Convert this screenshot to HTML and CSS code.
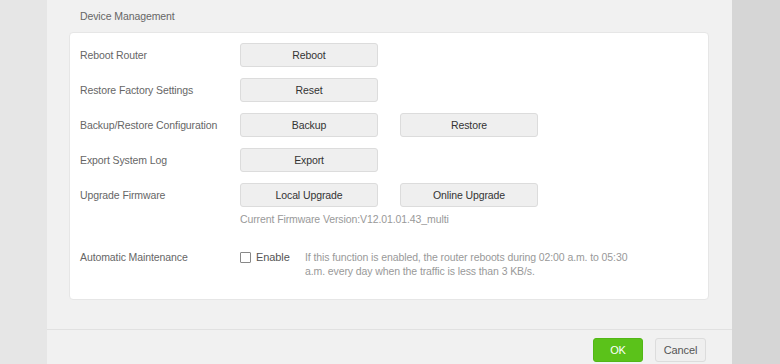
FILE: index.html
```html
<!DOCTYPE html>
<html lang="en">
<head>
    <meta charset="UTF-8">
    <meta name="viewport" content="width=device-width, initial-scale=1.0">
    <link rel="stylesheet" href="styles.css">
    <title>Device Management</title>
</head>
<body>
    <div class="lado-esq"></div>
    <div class="principal">
        <div class="conteudo">
            <div class="titulo">Device Management</div>
            <div class="cartao">
                <div class="linha">
                    <div class="rotulo">Reboot Router</div>
                    <button class="botao">Reboot</button>
                </div>
                <div class="linha">
                    <div class="rotulo">Restore Factory Settings</div>
                    <button class="botao">Reset</button>
                </div>
                <div class="linha">
                    <div class="rotulo">Backup/Restore Configuration</div>
                    <button class="botao">Backup</button>
                    <button class="botao botao2">Restore</button>
                </div>
                <div class="linha">
                    <div class="rotulo">Export System Log</div>
                    <button class="botao">Export</button>
                </div>
                <div class="linha">
                    <div class="rotulo">Upgrade Firmware</div>
                    <button class="botao">Local Upgrade</button>
                    <button class="botao botao2">Online Upgrade</button>
                </div>
                <div class="versao">Current Firmware Version:V12.01.01.43_multi</div>
                <div class="linha-auto">
                    <div class="rotulo">Automatic Maintenance</div>
                    <label class="marcar"><span class="caixa"></span>Enable</label>
                    <p class="dica">If this function is enabled, the router reboots during 02:00 a.m. to 05:30 a.m. every day when the traffic is less than 3 KB/s.</p>
                </div>
            </div>
        </div>
        <div class="rodape">
            <button class="ok">OK</button>
            <button class="cancelar">Cancel</button>
        </div>
    </div>
    <div class="lado-dir"></div>
</body>
</html>
```

FILE: styles.css
```css
body, html {
    margin: 0;
    padding: 0;
    height: 100%;
}

body {
    display: flex;
    font-family: "Liberation Sans", Arial, sans-serif;
    font-size: 10.5px;
    letter-spacing: -0.1px;
    color: #666;
    overflow: hidden;
}

button {
    font-family: "Liberation Sans", Arial, sans-serif;
    font-size: 10.5px;
    letter-spacing: -0.1px;
    padding: 0;
    cursor: pointer;
}

.lado-esq {
    width: 47px;
    background-color: #e6e6e6;
}

.lado-dir {
    width: 48px;
    background-color: #d6d6d6;
}

.principal {
    flex: 1;
    background-color: #f1f1f1;
    display: flex;
    flex-direction: column;
}

.conteudo {
    height: 330px;
    box-sizing: border-box;
    border-bottom: 1px solid #e1e1e1;
    padding-left: 22px;
}

.titulo {
    height: 32px;
    line-height: 33px;
    padding-left: 11px;
}

.cartao {
    width: 640px;
    height: 268px;
    box-sizing: border-box;
    background-color: #fff;
    border: 1px solid #e6e6e6;
    border-radius: 4px;
    padding: 10px 10px 0 10px;
}

.linha {
    display: flex;
    align-items: center;
    height: 24px;
    margin-bottom: 11px;
}

.rotulo {
    width: 160px;
    flex-shrink: 0;
}

.botao {
    width: 138px;
    height: 24px;
    background-color: #efefef;
    border: 1px solid #dcdcdc;
    border-radius: 3px;
    color: #333;
}

.botao2 {
    margin-left: 22px;
}

.versao {
    margin-top: -6px;
    padding-left: 160px;
    line-height: 14px;
    color: #999;
}

.linha-auto {
    display: flex;
    align-items: flex-start;
    margin-top: 24px;
    line-height: 14px;
}

.marcar {
    display: flex;
    align-items: center;
    width: 65px;
    flex-shrink: 0;
    font-size: 11px;
    color: #555;
}

.caixa {
    width: 9px;
    height: 9px;
    border: 1px solid #888;
    border-radius: 1px;
    margin-right: 5px;
}

.dica {
    margin: 0;
    width: 335px;
    color: #999;
}

.rodape {
    flex: 1;
    display: flex;
    justify-content: flex-end;
    align-items: flex-start;
    padding: 8px 26px 0 0;
    gap: 12px;
}

.ok {
    width: 50px;
    height: 24px;
    background-color: #5bc21a;
    border: 1px solid #52b716;
    border-radius: 3px;
    color: #fff;
    font-size: 11px;
}

.cancelar {
    width: 51px;
    height: 24px;
    background-color: #efefef;
    border: 1px solid #dcdcdc;
    border-radius: 3px;
    color: #555;
    font-size: 11px;
}
```
